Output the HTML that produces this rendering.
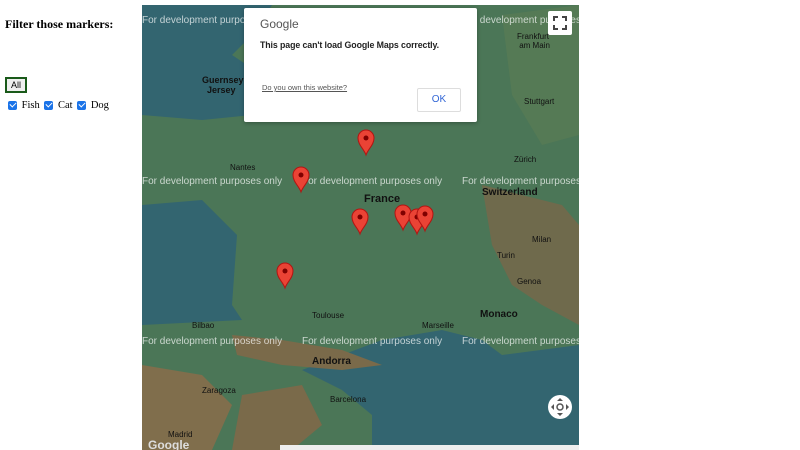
<!DOCTYPE html>
<html><head><style>
body{margin:0;width:800px;height:450px;overflow:hidden;background:#fff;font-family:"Liberation Serif",serif;position:relative}
h3{position:absolute;left:5px;top:17px;margin:0;font-size:12px;font-weight:bold}
.btn{position:absolute;left:5px;top:77px;border:2px solid #1a5a1a;background:#efefef;font:9px "Liberation Sans",sans-serif;padding:1px 4px;}
.cbs{position:absolute;left:6px;top:100px;font-size:10.5px;display:flex;align-items:center}
.cb{display:inline-block;width:9px;height:9px;background:#1a73e8;border-radius:2px;margin:0 2px 0 2px;position:relative}
.cb:after{content:"";position:absolute;left:2.5px;top:0px;width:3px;height:5px;border:solid #fff;border-width:0 1.5px 1.5px 0;transform:rotate(45deg)}
#map{position:absolute;left:142px;top:5px;width:437px;height:445px;overflow:hidden;background:#4b7657}
.wm{position:absolute;color:rgba(255,255,255,.7);font:10px "Liberation Sans",sans-serif;white-space:nowrap}
.lbl{position:absolute;font:7px "Liberation Sans",sans-serif;color:#e8efe8;white-space:nowrap}
.dlg{position:absolute;left:244px;top:8px;width:233px;height:114px;background:#fff;border-radius:2px;box-shadow:0 1px 4px rgba(0,0,0,.3);font-family:"Liberation Sans",sans-serif}
</style></head><body>
<h3>Filter those markers:</h3>
<div class="btn">All</div>
<div class="cbs"><span class="cb"></span>&nbsp;Fish&nbsp;<span class="cb"></span>&nbsp;Cat&nbsp;<span class="cb"></span>&nbsp;Dog</div>
<div id="map">
<svg width="437" height="445" style="position:absolute;left:0;top:0">
<path d="M0 0 H130 L110 30 L90 50 L120 70 L110 110 L60 115 L0 110 Z" fill="#336570"/>
<path d="M0 200 L60 195 L95 230 L90 300 L100 315 L0 320 Z" fill="#336570"/>
<path d="M160 365 L200 350 L240 335 L300 325 L340 335 L360 350 L437 340 V445 H230 L230 410 L200 385 Z" fill="#336570"/>
<path d="M90 330 L140 335 L200 345 L240 360 L200 365 L140 360 L95 350 Z" fill="#7a6a4a"/>
<path d="M340 180 L380 190 L420 200 L437 220 V320 L400 300 L370 280 L350 240 Z" fill="#6f6a4c"/>
<path d="M0 360 L60 370 L90 400 L70 445 H0 Z" fill="#806e4c"/>
<path d="M100 390 L160 380 L180 420 L150 445 H90 Z" fill="#7a6a4a"/>
<path d="M360 10 L437 0 V130 L400 140 L370 90 Z" fill="#557a55"/>
</svg>
<div class="lbl" style="left:222px;top:188px;font-size:11px;font-weight:bold;color:#111">France</div>
<div class="lbl" style="left:340px;top:182px;font-size:10px;font-weight:bold;color:#111">Switzerland</div>
<div class="lbl" style="left:338px;top:304px;font-size:10px;font-weight:bold;color:#111">Monaco</div>
<div class="lbl" style="left:170px;top:351px;font-size:10px;font-weight:bold;color:#111">Andorra</div>
<div class="lbl" style="left:60px;top:70px;font-size:9px;font-weight:bold;color:#111">Guernsey<br>&nbsp;&nbsp;Jersey</div>
<div class="lbl" style="left:88px;top:158px;font-size:8px;color:#111">Nantes</div>
<div class="lbl" style="left:170px;top:306px;font-size:8px;color:#111">Toulouse</div>
<div class="lbl" style="left:280px;top:316px;font-size:8px;color:#111">Marseille</div>
<div class="lbl" style="left:50px;top:316px;font-size:8px;color:#111">Bilbao</div>
<div class="lbl" style="left:60px;top:381px;font-size:8px;color:#111">Zaragoza</div>
<div class="lbl" style="left:188px;top:390px;font-size:8px;color:#111">Barcelona</div>
<div class="lbl" style="left:26px;top:425px;font-size:8px;color:#111">Madrid</div>
<div class="lbl" style="left:375px;top:27px;font-size:8px;color:#111">Frankfurt<br>&nbsp;am Main</div>
<div class="lbl" style="left:382px;top:92px;font-size:8px;color:#111">Stuttgart</div>
<div class="lbl" style="left:372px;top:150px;font-size:8px;color:#111">Zürich</div>
<div class="lbl" style="left:390px;top:230px;font-size:8px;color:#111">Milan</div>
<div class="lbl" style="left:355px;top:246px;font-size:8px;color:#111">Turin</div>
<div class="lbl" style="left:375px;top:272px;font-size:8px;color:#111">Genoa</div>
<div class="wm" style="left:0;top:10px">For development purposes only</div>
<div class="wm" style="left:160px;top:10px">For development purposes only</div>
<div class="wm" style="left:320px;top:10px">For development purposes only</div>
<div class="wm" style="left:0;top:171px">For development purposes only</div>
<div class="wm" style="left:160px;top:171px">For development purposes only</div>
<div class="wm" style="left:320px;top:171px">For development purposes only</div>
<div class="wm" style="left:0;top:331px">For development purposes only</div>
<div class="wm" style="left:160px;top:331px">For development purposes only</div>
<div class="wm" style="left:320px;top:331px">For development purposes only</div>
<svg width="437" height="445" style="position:absolute;left:0;top:0">
<defs><g id="m"><path d="M0 10 C-2 4 -8 0 -8 -7 A8 8 0 1 1 8 -7 C8 0 2 4 0 10 Z" fill="#ea4335" stroke="#b31412" stroke-width="1"/><circle cx="0" cy="-7" r="2.5" fill="#7f0000"/></g></defs>
<use href="#m" x="224" y="140"/><use href="#m" x="159" y="177"/><use href="#m" x="218" y="219"/>
<use href="#m" x="261" y="215"/><use href="#m" x="275" y="219"/><use href="#m" x="283" y="216"/><use href="#m" x="143" y="273"/>
<rect x="406" y="6" width="24" height="24" fill="#fff" rx="2"/>
<path d="M412 16v-4h4M424 16v-4h-4M412 20v4h4M424 20v4h-4" stroke="#444" stroke-width="2" fill="none"/>
<circle cx="418" cy="402" r="12" fill="#fff"/>
<path d="M418 393l3 3h-6zM418 411l3-3h-6zM409 402l3-3v6zM427 402l-3-3v6z" fill="#555"/>
<circle cx="418" cy="402" r="3" fill="none" stroke="#555" stroke-width="1.5"/>
<rect x="138" y="440" width="299" height="5" fill="#eee"/>
</svg>
<div class="lbl" style="left:6px;top:433px;font-size:12px;color:#ddd;font-weight:bold">Google</div>
</div>
<div class="dlg">
<div style="position:absolute;left:16px;top:9px;font-size:12px;color:#555">Google</div>
<div style="position:absolute;left:16px;top:32px;font-size:8.8px;color:#222;font-weight:bold;letter-spacing:-0.1px">This page can't load Google Maps correctly.</div>
<div style="position:absolute;left:18px;top:75px;font-size:7.5px;color:#555;text-decoration:underline">Do you own this website?</div>
<div style="position:absolute;left:173px;top:80px;width:42px;height:22px;border:1px solid #ddd;border-radius:2px;font-size:10px;color:#3367d6;text-align:center;line-height:22px">OK</div>
</div>
</body></html>
